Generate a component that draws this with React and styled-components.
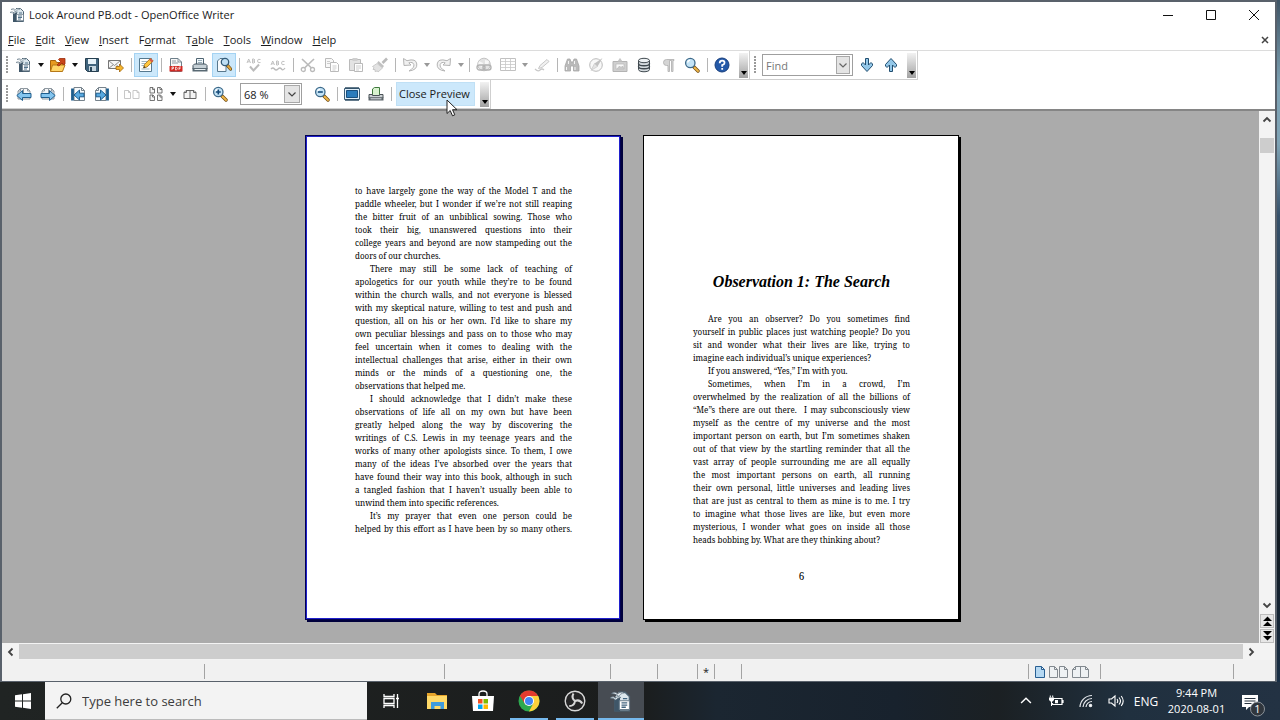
import styled, { createGlobalStyle } from "styled-components";

const GlobalStyle = createGlobalStyle`
  * {
    box-sizing: border-box;
  }
  body {
    margin: 0;
    font-family: "Open Sans", "Noto Sans", sans-serif;
    font-size: 11px;
    color: #1a1a1a;
    overflow: hidden;
  }
  button, input, select {
    font: inherit;
    color: inherit;
    border: 0;
    padding: 0;
    margin: 0;
    background: none;
    border-radius: 0;
    outline: 0;
  }
  svg {
    display: block;
    flex: none;
  }
`;

const Desktop = styled.div`
  height: 100vh;
  display: flex;
  flex-direction: column;
  background: linear-gradient(#3f5566, #7fa3b5 12%, #7fa3b5 20%, #35506a 30%, #101820 75%, #1c3550);
`;
const AppWindow = styled.div`
  flex: 1;
  min-height: 0;
  display: flex;
  flex-direction: column;
  margin-right: 3px;
  background: #fff;
  border: 2px solid #59616b;
  border-bottom-width: 1px;
`;

/* title and menu */
const TitleBar = styled.header`
  display: flex;
  align-items: center;
  height: 25px;
  padding-left: 8px;
`;
const Title = styled.h1`
  flex: 1;
  margin: 0 0 0 3px;
  font-size: 11px;
  font-weight: 400;
`;
const CaptionButton = styled.button`
  width: 43px;
  height: 24px;
  display: grid;
  place-items: center;
`;
const MenuBar = styled.nav`
  display: flex;
  align-items: center;
  gap: 10px;
  height: 24px;
  padding: 3px 6px 0;
  border-bottom: 1px solid #dcdcdc;
`;
const MenuItem = styled.button`
  font-size: 11px;
  line-height: 16px;
`;
const CloseDocument = styled.button`
  margin-left: auto;
`;

/* toolbars */
const ToolbarRow = styled.div`
  display: flex;
  height: 29px;
`;
const Toolbar = styled.div`
  display: flex;
  align-items: center;
  height: 29px;
  padding-left: 3px;
  border-right: 1px solid #cfcfcf;
  border-bottom: 1px solid #cfcfcf;
`;
const Grip = styled.span`
  width: 7px;
  height: 18px;
  background: radial-gradient(circle at 2px 1px, #9a9a9a 1px, transparent 1px) 0 0 / 7px 3px;
`;
const ToolButton = styled.button`
  width: 24px;
  height: 24px;
  display: grid;
  place-items: center;
  background: ${(props) => (props.$active ? "#cce8fb" : "none")};
  border: 1px solid ${(props) => (props.$active ? "#a4d3f3" : "transparent")};
  filter: ${(props) => (props.disabled ? "grayscale(1)" : "none")};
  opacity: ${(props) => (props.disabled ? 0.4 : 1)};
`;
const ArrowButton = styled.button`
  width: 10px;
  height: 24px;
  display: grid;
  place-items: center;
`;
const Separator = styled.span`
  width: 6px;
  height: 14px;
  background: linear-gradient(#b5b5b5, #b5b5b5) center / 1px 100% no-repeat;
`;
const Overflow = styled.button`
  width: 9px;
  height: 25px;
  margin: 0 1px 0 ${(props) => props.$gap};
  display: flex;
  align-items: flex-end;
  justify-content: center;
  padding-bottom: 3px;
  background: linear-gradient(#f2f2f2, #a2a2a2);
`;
const FindBox = styled.div`
  display: flex;
  align-items: center;
  width: 91px;
  height: 22px;
  margin: 0 2px;
  padding: 1px 2px 1px 3px;
  border: 1px solid #9f9f9f;
  color: #777;
`;
const FindInput = styled.input`
  flex: 1;
  min-width: 0;
  &::placeholder {
    color: #777;
    opacity: 1;
  }
`;
const DropButton = styled.button`
  width: 14px;
  height: 18px;
  display: grid;
  place-items: center;
  background: #e4e4e4;
  border: 1px solid #a8a8a8;
`;
const ZoomBox = styled.label`
  display: grid;
  grid-template-columns: 1fr 16px;
  align-items: center;
  width: 62px;
  height: 22px;
  margin: 0 8px;
  padding: 1px;
  border: 1px solid #9f9f9f;
`;
const ZoomSelect = styled.select`
  grid-area: 1 / 1 / 2 / 3;
  appearance: none;
  height: 18px;
  padding-left: 2px;
`;
const ZoomArrow = styled.span`
  grid-area: 1 / 2;
  height: 18px;
  display: grid;
  place-items: center;
  background: #e4e4e4;
  border: 1px solid #a8a8a8;
  pointer-events: none;
`;
const ClosePreview = styled.button`
  position: relative;
  height: 24px;
  width: 79px;
  margin-left: 2px;
  padding: 0 2px 2px;
  background: #cce8fb;
  border: 1px solid #c0e0f5;
  font-size: 11px;
  text-align: left;
  white-space: nowrap;
`;
const Pointer = styled.svg`
  position: absolute;
  left: 49px;
  top: 16px;
  z-index: 2;
`;

/* document area */
const Workspace = styled.main`
  flex: 1;
  min-height: 0;
  display: flex;
  border-top: 2px solid #858585;
`;
const Canvas = styled.div`
  flex: 1;
  display: flex;
  justify-content: center;
  align-items: flex-start;
  gap: 22px;
  padding: 24px 0 0 3px;
  background: #ababab;
`;
const Page = styled.article`
  width: 316px;
  aspect-ratio: 316 / 485;
  display: flex;
  flex-direction: column;
  padding: ${(props) => (props.$selected ? "48px 48px 0 49px" : "134px 48px 0 49px")};
  background: #fff;
  border: 1px solid ${(props) => (props.$selected ? "#000050" : "#000")};
  box-shadow: ${(props) =>
    props.$selected ? "inset 0 0 0 1px #2020cc, 2px 2px 0 #00003c" : "2px 2px 0 #000"};
  font-family: "Noto Serif", "Liberation Serif", serif;
  color: #000;
`;
const ChapterTitle = styled.h2`
  margin: 0 0 18px;
  font-family: "Liberation Serif", serif;
  font-size: 16px;
  line-height: 24px;
  font-style: italic;
  font-weight: 700;
  text-align: center;
  white-space: nowrap;
`;
const Paragraph = styled.p`
  margin: 0;
  font-size: 8px;
  line-height: 13px;
`;
const Line = styled.span`
  display: block;
  white-space: nowrap;
  text-align-last: ${(props) => (props.$last ? "left" : "justify")};
  padding-left: ${(props) => (props.$first ? "15px" : "0")};
`;
const PageNumber = styled.footer`
  margin-top: 23px;
  font-size: 10px;
  line-height: 14px;
  text-align: center;
`;

/* scroll bars */
const VerticalBar = styled.div`
  width: 16px;
  display: flex;
  flex-direction: column;
  align-items: center;
  background: #f3f3f3;
`;
const ScrollButton = styled.button`
  width: 16px;
  height: 17px;
  display: grid;
  place-items: center;
`;
const VerticalThumb = styled.div`
  width: 14px;
  height: 15px;
  margin: 10px 0 auto;
  background: #cdcdcd;
`;
const PageButton = styled.button`
  width: 14px;
  height: 14px;
  margin-top: 1px;
  display: grid;
  place-items: center;
  background: #e6e6e6;
  border: 1px solid #bdbdbd;
`;
const HorizontalBar = styled.div`
  display: flex;
  height: 17px;
  padding: 0 16px 0 1px;
  background: #f3f3f3;
`;
const HorizontalThumb = styled.div`
  flex: 1;
  margin: 1px 0;
  background: #cdcdcd;
`;

const StatusBar = styled.footer`
  display: flex;
  align-items: center;
  height: 21px;
  padding-top: 2px;
  background: #f1f1f1;
`;
const StatusCell = styled.div`
  flex: ${(props) => (props.$width ? `0 0 ${props.$width}` : "1")};
  height: 15px;
  line-height: 15px;
  text-align: center;
  border-right: 1px solid ${(props) => (props.$open ? "transparent" : "#a3a3a3")};
`;
const ViewModes = styled(StatusCell)`
  display: flex;
  align-items: center;
  gap: 4px;
  padding-left: 6px;
`;

/* taskbar */
const Taskbar = styled.footer`
  display: flex;
  height: 38px;
  background: linear-gradient(90deg, #202423, #1b1d1d 50%, #1b2631 56%, #18222d 70%, #1b2023 78%, #20303f 88%, #233243);
  color: #fff;
`;
const StartButton = styled.button`
  width: 45px;
  display: grid;
  place-items: center;
`;
const SearchBox = styled.label`
  display: flex;
  align-items: center;
  gap: 10px;
  width: 322px;
  padding-left: 11px;
  margin-right: 1px;
  background: #f3f3f3;
  border-bottom: 1px solid #bbb;
`;
const SearchInput = styled.input`
  flex: 1;
  font-size: 13px;
  &::placeholder {
    color: #3c3c3c;
    opacity: 1;
  }
`;
const TaskButton = styled.button`
  width: 46px;
  display: grid;
  place-items: center;
  background: ${(props) => (props.$focused ? "#474c53" : "none")};
  &::after {
    content: "";
    grid-area: 1 / 1;
    place-self: end center;
    width: ${(props) => (props.$focused ? "46px" : "38px")};
    height: 2px;
    background: ${(props) => (props.$running ? "#76b9ed" : "none")};
  }
  & > svg {
    grid-area: 1 / 1;
  }
`;
const Tray = styled.div`
  margin-left: auto;
  display: flex;
  align-items: center;
  padding-right: 13px;
`;
const TrayButton = styled.button`
  width: 30px;
  height: 38px;
  display: grid;
  place-items: center;
  font-size: 12px;
`;
const Clock = styled.time`
  width: 71px;
  font-size: 11px;
  line-height: 16px;
  text-align: center;
  white-space: nowrap;
`;
const Notifications = styled.button`
  width: 35px;
  height: 38px;
  display: grid;
  place-items: end;
`;

const WriterIcon = ({ size = 16 }) => (
  <svg width={size} height={size} viewBox="0 0 16 16">
    <path d="M3.5 5v9.5h10V4.5l-3-3H6" fill="#dbe6ec" stroke="#4f6474" />
    <path d="M3 5h4v10H3z" fill="#3f5668" />
    <path d="M1 2.5c2-1.5 3.5-.8 4.2.4C6.5 1.5 8.5 1 10 2 8 2.2 7 3 5.8 4.4 4.5 3 3 2.5 1 2.5zM0 5.5c1.5-1.2 3-.8 3.6.2C4.8 4.5 6.5 4.5 7.5 5.2 6 5.4 5 6 4 7 3 6 1.5 5.5 0 5.5z" fill="#f4f8fa" stroke="#4f6474" strokeWidth=".5" />
    <path d="M6.5 7.5h7v6h-7z" fill="#fff" stroke="#6a7d8b" strokeWidth=".7" />
    <path d="M8 9h4M8 10.5h4M8 12h3M9 6h3" stroke="#40637e" strokeWidth=".9" />
  </svg>
);

// Toolbar glyphs, all on a 16 x 16 grid
const glyphs = {
  open: (
    <>
      <path d="M.5 14V3.5h5l1 2h6V14z" fill="#e79a20" stroke="#a8640c" />
      <path d="M.5 14.5L2.5 8H15l-2.5 6.5z" fill="#ffd568" stroke="#b67818" />
      <path d="M7 8l3.5-3.5-2-2 1-1H15V7l-1 1-2-2-3 3z" fill="#c8461a" stroke="#9c2c0b" strokeWidth=".8" />
    </>
  ),
  save: (
    <>
      <path d="M1.5 1.5h13v13h-11l-2-2z" fill="#40647d" stroke="#263f50" />
      <path d="M4 2h8v5H4z" fill="#e7f2f8" />
      <path d="M5 9h7v5H5z" fill="#c7d6df" />
      <path d="M6 10h2v4H6z" fill="#29475a" />
    </>
  ),
  mail: (
    <>
      <path d="M.5 3.5h12v8H.5z" fill="#f5f5f5" stroke="#777" />
      <path d="M.5 3.5l6 5 6-5M.5 11.5L5 8M12.5 11.5L8.5 8" fill="none" stroke="#777" strokeWidth=".8" />
      <path d="M8 9.5h3.5V7l4 4-4 4v-2.5H8z" fill="#f5b52c" stroke="#a2650a" strokeWidth=".8" />
    </>
  ),
  edit: (
    <>
      <path d="M1.5 1.5h12v13h-12z" fill="#fff" stroke="#55788e" />
      <path d="M3.5 4.5h6M3.5 6.5h4M3.5 8.5h3M3.5 12h8" stroke="#8aa4b4" strokeWidth=".8" />
      <path d="M5.5 11l1-3.5 6-6.2L15.2 4 9 10z" fill="#ffc63e" stroke="#9a6718" strokeWidth=".8" />
      <path d="M12.5 1.3L15.2 4l-1.5 1.5L11 2.8z" fill="#d65a4b" />
      <path d="M5.5 11l.6-2.1 1.5 1.5z" fill="#333" />
    </>
  ),
  pdf: (
    <>
      <path d="M2.5 14.5v-13H10L13.500 5v9.500z" fill="#f8f8f8" stroke="#6d7f8a" />
      <path d="M10 1.5V5h3.5M4 4h4M4 6h6" fill="none" stroke="#6d7f8a" strokeWidth=".8" />
      <path d="M1.5 9h13v5.5h-13z" fill="#d22a24" />
      <path d="M4 13v-3h1.5v1.5H4M7.5 10v3h1l.8-1.5-.8-1.5zM11 13v-3h2M11 11.5h1.5" fill="none" stroke="#fff" strokeWidth=".7" />
    </>
  ),
  print: (
    <>
      <path d="M4.5 7V1.5h7V7" fill="#f2f8fb" stroke="#4f6472" />
      <path d="M6 3.5h4M6 5.5h4" stroke="#98adb9" />
      <path d="M1 12V8.500L2.500 7h11L15 8.500V12z" fill="#c5d0d6" stroke="#41515c" />
      <path d="M.5 11h15v3.5H.5z" fill="#596973" />
      <path d="M2.5 12.5h11" stroke="#e8eff2" />
    </>
  ),
  preview: (
    <>
      <path d="M1.5 14.5V4L4 1.5h6v13z" fill="#f8fbfd" stroke="#58788d" />
      <path d="M11.5 8.5l3 3.5" stroke="#5b461c" strokeWidth="3.4" strokeLinecap="round" />
      <path d="M12 9l2.5 3" stroke="#e1a53b" strokeWidth="2" strokeLinecap="round" />
      <circle cx="9" cy="5" r="3.7" fill="#bfe0f5" stroke="#335b78" strokeWidth="1.3" />
    </>
  ),
  spell: (
    <>
      <path d="M1 6l1.7-4L4.5 6M1.7 4.8h2M6.5 6V2H8q1.500 1 0 2 2 1 0 2zM6.5 4H8M14.5 2.5q-3-1-3 1.5t3 1.5" fill="none" stroke="#555" strokeWidth=".9" />
      <path d="M4 9.5l3.5 4L13 7.5" fill="none" stroke="#555" strokeWidth="2" />
    </>
  ),
  autospell: (
    <>
      <path d="M1 8l1.7-4L4.5 8M1.7 6.8h2M6.5 8V4H8q1.5 1 0 2 2 1 0 2zM6.5 6H8M14.5 4.5q-3-1-3 1.5t3 1.5" fill="none" stroke="#555" strokeWidth=".9" />
      <path d="M1 12q2-2 3.500 0t3.500 0 3.500 0 3.500-1" fill="none" stroke="#555" strokeWidth="1.3" />
    </>
  ),
  cut: (
    <>
      <path d="M2 2l9.5 9M14 2l-9.5 9" stroke="#555" strokeWidth="1.7" />
      <circle cx="3.3" cy="12.5" r="2" fill="none" stroke="#555" strokeWidth="1.3" />
      <circle cx="12.5" cy="12.5" r="2" fill="none" stroke="#555" strokeWidth="1.3" />
    </>
  ),
  copy: (
    <>
      <path d="M1.5 1.5h6l2 2v7h-8z" fill="#eee" stroke="#555" />
      <path d="M6.5 5.5h6l2 2v7h-8z" fill="#fff" stroke="#555" />
      <path d="M3 4.5h3M3 6.5h3M8.5 9h4M8.5 11h4M8.5 13h3" stroke="#666" strokeWidth=".8" />
    </>
  ),
  paste: (
    <>
      <path d="M1.5 2.5h11v11h-11z" fill="#bbb" stroke="#555" />
      <path d="M4.5 1h5v3h-5z" fill="#888" />
      <path d="M6.5 6.5h8v8h-8z" fill="#fff" stroke="#555" />
      <path d="M8 9h5M8 11h5M8 13h3" stroke="#666" strokeWidth=".8" />
    </>
  ),
  brush: (
    <>
      <path d="M15 1.5L10.5 6" stroke="#555" strokeWidth="2.6" />
      <path d="M6.5 4L12 9l-1.5 2L5 6z" fill="#666" />
      <path d="M5 6.5l-4.5 3 1.5 1-1 2h2v2l2.5-.5.5 1 4.5-4z" fill="#bbb" stroke="#666" strokeWidth=".8" />
    </>
  ),
  undo: <path d="M1.5 1.5l.5 7L9 8 6.8 5.8q4-1.3 5 1.7T7 14q8.5-1 7.800-7T5 3.700z" fill="#ddd" stroke="#444" />,
  redo: <path d="M14.5 1.5l-.5 7L7 8l2.200-2.200q-4-1.300-5 1.700T9 14q-8.500-1-7.800-7T11 3.700z" fill="#ddd" stroke="#444" />,
  link: (
    <>
      <circle cx="8" cy="7.5" r="6.3" fill="#bbb" stroke="#666" />
      <path d="M3 4l4 2-1 4-4-2zM9 3l4 1-1 4-3-1z" fill="#eee" />
      <rect x="1" y="8" width="8" height="5" rx="2.5" fill="none" stroke="#444" strokeWidth="1.4" />
      <rect x="7" y="8" width="8" height="5" rx="2.5" fill="none" stroke="#444" strokeWidth="1.4" />
    </>
  ),
  table: (
    <>
      <path d="M.5 1.5h15v12H.5z" fill="#fff" stroke="#666" />
      <path d="M.5 4.5h15M.5 7.5h15M.5 10.5h15M5.5 1.5v12M10.5 1.5v12" stroke="#777" strokeWidth=".8" />
    </>
  ),
  draw: (
    <>
      <path d="M1 12q3 3 5 1t4 0" fill="none" stroke="#777" strokeWidth="1.2" />
      <path d="M4.5 11.5L6 8.5l7-6 2 2-7 6z" fill="#ddd" stroke="#666" strokeWidth=".9" />
    </>
  ),
  binoculars: (
    <>
      <path d="M1 9l2.5-7H6l1 3h2l1-3h2.5L15 9v5H9.500V9h-3v5H1z" fill="#555" stroke="#222" strokeWidth=".8" />
      <path d="M2.5 10v3M11 10v3M4.5 4v3M10.5 4v3" stroke="#e5e5e5" />
    </>
  ),
  compass: (
    <>
      <circle cx="8" cy="8" r="6.3" fill="#eee" stroke="#555" />
      <path d="M14.5 1l-5 8.5-3-3z" fill="#666" />
      <path d="M9.5 9.5l-6.5 4 3.5-7z" fill="#bbb" stroke="#666" strokeWidth=".6" />
    </>
  ),
  gallery: (
    <>
      <path d="M1 4.5h14v10H1z" fill="#888" stroke="#444" />
      <path d="M4 7h8v5H4z" fill="#eee" stroke="#555" strokeWidth=".7" />
      <path d="M5 12l2.5-3L9 10.500 10.500 9l1.500 3M6 4.500l2-3 2 3" fill="#777" stroke="#555" strokeWidth=".7" />
    </>
  ),
  database: (
    <>
      <path d="M2.5 3.5v9c0 3 11 3 11 0v-9" fill="#d4dade" stroke="#414a50" />
      <ellipse cx="8" cy="3.5" rx="5.5" ry="2.2" fill="#eef2f4" stroke="#414a50" />
      <path d="M2.5 6.5c0 3 11 3 11 0M2.5 9.5c0 3 11 3 11 0" fill="none" stroke="#414a50" strokeWidth="1.5" />
    </>
  ),
  marks: <path d="M14 2.5H6.5a3 3 0 0 0 0 6H8v6h1.5v-11h2v11H13v-11h1z" fill="#999" stroke="#444" strokeWidth=".9" />,
  lens: (
    <>
      <path d="M9.5 9.5L14 14" stroke="#704b12" strokeWidth="3.4" strokeLinecap="round" />
      <path d="M10.5 10.5L14 14" stroke="#edb548" strokeWidth="2" strokeLinecap="round" />
      <circle cx="6.3" cy="6" r="4.7" fill="#c4e4f7" stroke="#3d6989" strokeWidth="1.3" />
      <path d="M3.5 5.5q.5-2 2.5-2.4" fill="none" stroke="#fff" strokeWidth="1.3" />
    </>
  ),
  help: (
    <>
      <circle cx="8" cy="8" r="7" fill="#2459a8" stroke="#173e7c" />
      <path d="M5.7 6.2q0-2.5 2.5-2.5t2.3 2.2q0 1.4-2.3 2.3v1.5M8.2 11v1.8" fill="none" stroke="#fff" strokeWidth="1.8" />
    </>
  ),
  down: <path d="M6.5 1.5h3V8L12 5.500 13.500 7v1.500l-5.500 6-5.500-6V7L4 5.500 6.500 8z" fill="#93c7e8" stroke="#214e70" />,
  up: <path d="M6.5 14.5h3V8l2.500 2.500L13.500 9V7.500l-5.500-6-5.500 6V9L4 10.500 6.500 8z" fill="#93c7e8" stroke="#214e70" />,
  previous: (
    <>
      <path d="M7.5 2.5h-3L2 5v8h12V5l-2.5-2.5h-4v8M4.5 2.5V5H2M11.5 2.5V5H14" fill="#f4f6f8" stroke="#8d979f" />
      <path d="M.8 9.500L6.500 4.500v3H15v4H6.500v3z" fill="#83c4ee" stroke="#1e5d8d" />
    </>
  ),
  next: (
    <>
      <path d="M8.5 2.5h-4L2 5v8h12V5l-2.500-2.500h-3v8M4.500 2.500V5H2M11.500 2.500V5H14" fill="#f4f6f8" stroke="#8d979f" />
      <path d="M15.2 9.500L9.500 4.500v3H1v4h8.500v3z" fill="#83c4ee" stroke="#1e5d8d" />
    </>
  ),
  first: (
    <>
      <path d="M4 1.5h7.5l3 3v10H4z" fill="#f7fafc" stroke="#77838c" />
      <path d="M11.5 1.5v3h3" fill="none" stroke="#77838c" />
      <path d="M2.5 2.5v12" stroke="#1e5d8d" strokeWidth="2.8" />
      <path d="M4 9l5.5-5v3.200H14v3.600H9.500V14z" fill="#58a9e0" stroke="#1e5d8d" />
    </>
  ),
  last: (
    <>
      <path d="M1.5 14.5v-10l3-3H12v13z" fill="#f7fafc" stroke="#77838c" />
      <path d="M4.5 1.5v3h-3" fill="none" stroke="#77838c" />
      <path d="M13.5 2.5v12" stroke="#1e5d8d" strokeWidth="2.8" />
      <path d="M12 9L6.500 4v3.200H2v3.600h4.500V14z" fill="#58a9e0" stroke="#1e5d8d" />
    </>
  ),
  twoPages: <path d="M.5 4.5h4l2 2v6h-6zM9 4.5h4l2 2v6H9zM4.500 4.500v2h2M13 4.500v2h2" fill="#fff" stroke="#666" strokeWidth=".9" />,
  fourPages: <path d="M2 1.5h3L6.500 3v4H2zM9.500 1.500h3L14 3v4H9.500zM2 9h3l1.500 1.500v4H2zM9.500 9h3l1.500 1.500v4H9.500zM4.500 1.500v2h2M12 1.500v2h2M4.500 9v2h2M12 9v2h2" fill="#f8f8f8" stroke="#666" strokeWidth=".9" />,
  book: <path d="M8 4.5v8H2v-6l2-2h8l2 2v6H8M4.500 4.500v2H2M11.500 4.500v2H14" fill="#f4f4f4" stroke="#666" />,
  screen: (
    <>
      <path d="M.5 2.5h15v11H.5z" fill="#e0eff9" stroke="#3d5e78" />
      <path d="M2.5 4.5h11v7h-11z" fill="#2b7cbc" stroke="#194f7e" />
      <path d="M1 2h14M1 14h14" stroke="#304f66" strokeWidth="1.5" />
    </>
  ),
  printPage: (
    <>
      <path d="M4.5 9V3l2-1.5h5V9" fill="#d8f2cf" stroke="#407a3e" />
      <path d="M1 12V8.500h3.500v1h7v-1H15V12z" fill="#cbd1d4" stroke="#4a5257" />
      <path d="M.5 11.500h15v3H.5z" fill="#5a6368" />
      <path d="M2.5 12.8h11" stroke="#dfe5e8" />
    </>
  ),
};

const Glyph = ({ name, sign }) => (
  <svg width="16" height="16" viewBox="0 0 16 16">
    {glyphs[name]}
    {sign && <path d={sign === "plus" ? "M3.8 6h5M6.3 3.5v5" : "M3.8 6h5"} stroke="#174b79" strokeWidth="1.6" />}
  </svg>
);

const Tool = ({ icon, label, sign, active, disabled }) => (
  <ToolButton aria-label={label} $active={active} disabled={disabled}>
    {icon === "writer" ? <WriterIcon /> : <Glyph name={icon} sign={sign} />}
  </ToolButton>
);

const DropArrow = ({ label, muted }) => (
  <ArrowButton aria-label={label}>
    <svg width="6" height="4" viewBox="0 0 6 4">
      <path d="M0 0h6L3 4z" fill={muted ? "#999" : "#111"} />
    </svg>
  </ArrowButton>
);

const MoreButton = ({ gap, label }) => (
  <Overflow $gap={gap} aria-label={label}>
    <svg width="6" height="4" viewBox="0 0 6 4">
      <path d="M0 0h6L3 4z" fill="#000" />
    </svg>
  </Overflow>
);

const chevrons = {
  up: "M1.5 6.5L5 3l3.5 3.5",
  down: "M1.5 3.5L5 7l3.5-3.5",
  left: "M6.5 1.5L3 5l3.5 3.5",
  right: "M3.5 1.5L7 5 3.5 8.5",
};

const Chevron = ({ direction, color = "#444", size = 10, stroke = 1.8 }) => (
  <svg width={size} height={size} viewBox="0 0 10 10">
    <path d={chevrons[direction]} fill="none" stroke={color} strokeWidth={stroke} />
  </svg>
);

const menus = [
  ["", "F", "ile"],
  ["", "E", "dit"],
  ["", "V", "iew"],
  ["", "I", "nsert"],
  ["F", "o", "rmat"],
  ["T", "a", "ble"],
  ["", "T", "ools"],
  ["", "W", "indow"],
  ["", "H", "elp"],
];

const leftPage = [
  [
    "to have largely gone the way of the Model T and the",
    "paddle wheeler, but I wonder if we’re not still reaping",
    "the bitter fruit of an unbiblical sowing. Those who",
    "took their big, unanswered questions into their",
    "college years and beyond are now stampeding out the",
    "doors of our churches.",
  ],
  [
    "There may still be some lack of teaching of",
    "apologetics for our youth while they’re to be found",
    "within the church walls, and not everyone is blessed",
    "with my skeptical nature, willing to test and push and",
    "question, all on his or her own. I’d like to share my",
    "own peculiar blessings and pass on to those who may",
    "feel uncertain when it comes to dealing with the",
    "intellectual challenges that arise, either in their own",
    "minds or the minds of a questioning one, the",
    "observations that helped me.",
  ],
  [
    "I should acknowledge that I didn’t make these",
    "observations of life all on my own but have been",
    "greatly helped along the way by discovering the",
    "writings of C.S. Lewis in my teenage years and the",
    "works of many other apologists since. To them, I owe",
    "many of the ideas I’ve absorbed over the years that",
    "have found their way into this book, although in such",
    "a tangled fashion that I haven’t usually been able to",
    "unwind them into specific references.",
  ],
  ["It’s my prayer that even one person could be", "helped by this effort as I have been by so many others."],
];

const rightPage = [
  [
    "Are you an observer? Do you sometimes find",
    "yourself in public places just watching people? Do you",
    "sit and wonder what their lives are like, trying to",
    "imagine each individual’s unique experiences?",
  ],
  ["If you answered, “Yes,” I’m with you."],
  [
    "Sometimes, when I’m in a crowd, I’m",
    "overwhelmed by the realization of all the billions of",
    "“Me”s there are out there.\u00a0 I may subconsciously view",
    "myself as the centre of my universe and the most",
    "important person on earth, but I’m sometimes shaken",
    "out of that view by the startling reminder that all the",
    "vast array of people surrounding me are all equally",
    "the most important persons on earth, all running",
    "their own personal, little universes and leading lives",
    "that are just as central to them as mine is to me. I try",
    "to imagine what those lives are like, but even more",
    "mysterious, I wonder what goes on inside all those",
    "heads bobbing by. What are they thinking about?",
  ],
];

// The left page starts mid-paragraph and is filled right up to its last line
const BodyText = ({ paragraphs, continued }) =>
  paragraphs.map((lines, p) => (
    <Paragraph key={lines[0]}>
      {lines.map((line, i) => (
        <Line
          key={line}
          $first={i === 0 && !(continued && p === 0)}
          $last={i === lines.length - 1 && !(continued && p === paragraphs.length - 1)}
        >
          {line}
        </Line>
      ))}
    </Paragraph>
  ));

const StandardToolbar = () => (
  <Toolbar>
    <Grip />
    <Tool icon="writer" label="New" />
    <DropArrow label="New options" />
    <Tool icon="open" label="Open" />
    <DropArrow label="Open options" />
    <Tool icon="save" label="Save" />
    <Tool icon="mail" label="Document as e-mail" />
    <Separator />
    <Tool icon="edit" label="Edit file" active />
    <Separator />
    <Tool icon="pdf" label="Export as PDF" />
    <Tool icon="print" label="Print file" />
    <Tool icon="preview" label="Page preview" active />
    <Separator />
    <Tool icon="spell" label="Spelling" disabled />
    <Tool icon="autospell" label="AutoSpellcheck" disabled />
    <Separator />
    <Tool icon="cut" label="Cut" disabled />
    <Tool icon="copy" label="Copy" disabled />
    <Tool icon="paste" label="Paste" disabled />
    <Tool icon="brush" label="Format paintbrush" disabled />
    <Separator />
    <Tool icon="undo" label="Undo" disabled />
    <DropArrow label="Undo history" muted />
    <Tool icon="redo" label="Redo" disabled />
    <DropArrow label="Redo history" muted />
    <Separator />
    <Tool icon="link" label="Hyperlink" disabled />
    <Tool icon="table" label="Table" disabled />
    <DropArrow label="Table size" muted />
    <Tool icon="draw" label="Show draw functions" disabled />
    <Separator />
    <Tool icon="binoculars" label="Find and replace" disabled />
    <Tool icon="compass" label="Navigator" disabled />
    <Tool icon="gallery" label="Gallery" disabled />
    <Tool icon="database" label="Data sources" />
    <Tool icon="marks" label="Nonprinting characters" disabled />
    <Tool icon="lens" label="Zoom" />
    <Separator />
    <Tool icon="help" label="Help" />
    <MoreButton gap="5px" label="Standard toolbar options" />
  </Toolbar>
);

const PreviewToolbar = () => (
  <Toolbar>
    <Grip />
    <Tool icon="previous" label="Previous page" />
    <Tool icon="next" label="Next page" />
    <Separator />
    <Tool icon="first" label="First page" />
    <Tool icon="last" label="Last page" />
    <Separator />
    <Tool icon="twoPages" label="Two pages" disabled />
    <Tool icon="fourPages" label="Multiple pages" />
    <DropArrow label="Choose pages" />
    <Tool icon="book" label="Book preview" />
    <Separator />
    <Tool icon="lens" sign="plus" label="Zoom in" />
    <ZoomBox>
      <ZoomSelect aria-label="Preview zoom" defaultValue="68 %">
        <option>50 %</option>
        <option>68 %</option>
        <option>100 %</option>
      </ZoomSelect>
      <ZoomArrow>
        <Chevron direction="down" stroke={1.2} />
      </ZoomArrow>
    </ZoomBox>
    <Tool icon="lens" sign="minus" label="Zoom out" />
    <Separator />
    <Tool icon="screen" label="Full screen" />
    <Tool icon="printPage" label="Print page view" />
    <Separator />
    <ClosePreview>
      Close Preview
      <Pointer width="12" height="18" viewBox="0 0 12 18">
        <path d="M1 1v13.5l3.200-3 2.300 5.300 2.300-1-2.300-5.100H11z" fill="#fff" stroke="#222" />
      </Pointer>
    </ClosePreview>
    <MoreButton gap="5px" label="Preview toolbar options" />
  </Toolbar>
);

const FindToolbar = () => (
  <Toolbar>
    <Grip />
    <FindBox>
      <FindInput aria-label="Find" placeholder="Find" />
      <DropButton aria-label="Recent searches">
        <Chevron direction="down" stroke={1.2} color="#666" />
      </DropButton>
    </FindBox>
    <Tool icon="down" label="Find next" />
    <Tool icon="up" label="Find previous" />
    <MoreButton gap="4px" label="Find toolbar options" />
  </Toolbar>
);

const Tasks = () => (
  <>
    <TaskButton aria-label="Task view">
      <svg width="17" height="16" viewBox="0 0 17 16" fill="none" stroke="#fff" strokeWidth="1.3">
        <path d="M1 1v2.5h10V1M1 15v-2.5h10V15M1 5.5h10v5H1zM14.5 1v14M13 5.5h3" />
      </svg>
    </TaskButton>
    <TaskButton aria-label="File Explorer">
      <svg width="21" height="18" viewBox="0 0 21 18">
        <path d="M0 1h8l2 2h10v14H0z" fill="#e7a52b" />
        <path d="M0 4h20v13H0z" fill="#ffd968" />
        <path d="M4 17v-7h13v7h-3.5v-3h-6v3z" fill="#3f9bdc" />
      </svg>
    </TaskButton>
    <TaskButton aria-label="Microsoft Store">
      <svg width="22" height="22" viewBox="0 0 22 22">
        <path d="M7 8V4q0-3 4-3t4 3v4" fill="none" stroke="#fff" strokeWidth="1.3" />
        <path d="M0 6h22l-1 15H1z" fill="#fff" />
        <path d="M6 9h4.5v4.5H6z" fill="#f25022" />
        <path d="M11.5 9H16v4.5h-4.5z" fill="#7fba00" />
        <path d="M6 14.5h4.5V19H6z" fill="#00a4ef" />
        <path d="M11.5 14.5H16V19h-4.5z" fill="#ffb900" />
      </svg>
    </TaskButton>
    <TaskButton aria-label="Chrome" $running>
      <svg width="22" height="22" viewBox="0 0 22 22">
        <circle cx="11" cy="11" r="10.5" fill="#2da94f" />
        <path d="M11 11L1.900 5.800A10.500 10.500 0 0 1 20.100 5.800z" fill="#e33b2e" />
        <path d="M1.900 5.800L6.700 13.500 11 11V5.800z" fill="#e33b2e" />
        <path d="M11 6h9.200A10.500 10.500 0 0 1 11 21.500l4.300-8z" fill="#fdd13a" />
        <circle cx="11" cy="11" r="5" fill="#fff" />
        <circle cx="11" cy="11" r="4" fill="#4285f4" />
      </svg>
    </TaskButton>
    <TaskButton aria-label="OBS Studio" $running>
      <svg width="22" height="22" viewBox="0 0 22 22">
        <circle cx="11" cy="11" r="9.8" fill="#252526" stroke="#d7d7d7" strokeWidth="1.4" />
        <g fill="none" stroke="#d7d7d7" strokeWidth="2">
          <path d="M11 11q-4-3-1.5-7.5" />
          <path d="M11 11q-4-3-1.5-7.5" transform="rotate(120 11 11)" />
          <path d="M11 11q-4-3-1.5-7.5" transform="rotate(240 11 11)" />
        </g>
      </svg>
    </TaskButton>
    <TaskButton aria-label="OpenOffice Writer" $running $focused>
      <WriterIcon size={23} />
    </TaskButton>
  </>
);

const App = () => {
  return (
    <Desktop>
      <GlobalStyle />
      <AppWindow>
        <TitleBar>
          <WriterIcon />
          <Title>Look Around PB.odt - OpenOffice Writer</Title>
          <CaptionButton aria-label="Minimize">
            <svg width="10" height="10" viewBox="0 0 10 10">
              <path d="M0 5.5h10" stroke="#111" />
            </svg>
          </CaptionButton>
          <CaptionButton aria-label="Maximize">
            <svg width="10" height="10" viewBox="0 0 10 10">
              <path d="M.5.5h9v9h-9z" fill="none" stroke="#111" />
            </svg>
          </CaptionButton>
          <CaptionButton aria-label="Close">
            <svg width="10" height="10" viewBox="0 0 10 10">
              <path d="M0 0l10 10M10 0L0 10" stroke="#111" />
            </svg>
          </CaptionButton>
        </TitleBar>
        <MenuBar>
          {menus.map(([before, key, after]) => (
            <MenuItem key={before + key + after}>
              {before}
              <u>{key}</u>
              {after}
            </MenuItem>
          ))}
          <CloseDocument aria-label="Close document">
            <svg width="8" height="8" viewBox="0 0 8 8">
              <path d="M1 1l6 6M7 1L1 7" stroke="#444" strokeWidth="1.5" />
            </svg>
          </CloseDocument>
        </MenuBar>
        <ToolbarRow>
          <StandardToolbar />
          <FindToolbar />
        </ToolbarRow>
        <ToolbarRow>
          <PreviewToolbar />
        </ToolbarRow>

        <Workspace>
          <Canvas>
            <Page $selected>
              <BodyText paragraphs={leftPage} continued />
            </Page>
            <Page>
              <ChapterTitle>Observation 1: The Search</ChapterTitle>
              <BodyText paragraphs={rightPage} />
              <PageNumber>6</PageNumber>
            </Page>
          </Canvas>
          <VerticalBar>
            <ScrollButton aria-label="Scroll up">
              <Chevron direction="up" />
            </ScrollButton>
            <VerticalThumb />
            <ScrollButton aria-label="Scroll down">
              <Chevron direction="down" />
            </ScrollButton>
            <PageButton aria-label="Previous page">
              <svg width="9" height="10" viewBox="0 0 9 10">
                <path d="M0 5L4.5.5 9 5zM0 10l4.5-4.5L9 10z" fill="#000" />
              </svg>
            </PageButton>
            <PageButton aria-label="Next page">
              <svg width="9" height="10" viewBox="0 0 9 10">
                <path d="M0 0l4.5 4.5L9 0zM0 5l4.5 4.5L9 5z" fill="#000" />
              </svg>
            </PageButton>
          </VerticalBar>
        </Workspace>
        <HorizontalBar>
          <ScrollButton aria-label="Scroll left">
            <Chevron direction="left" />
          </ScrollButton>
          <HorizontalThumb />
          <ScrollButton aria-label="Scroll right">
            <Chevron direction="right" />
          </ScrollButton>
        </HorizontalBar>
        <StatusBar>
          <StatusCell $width="203px" />
          <StatusCell $width="240px" />
          <StatusCell $width="166px" />
          <StatusCell $width="47px" />
          <StatusCell $width="40px" />
          <StatusCell $width="17px">*</StatusCell>
          <StatusCell $width="27px" />
          <StatusCell />
          <ViewModes $width="72px">
            <svg width="10" height="12" viewBox="0 0 10 12">
              <path d="M.5.5h6l3 3v8h-9zM6.5.5v3h3" fill="#b5d8f2" stroke="#285f92" />
            </svg>
            <svg width="19" height="12" viewBox="0 0 19 12">
              <path d="M.5.5h5l3 3v8h-8zM5.5.5v3h3M10.5.5h5l3 3v8h-8zM15.5.5v3h3" fill="#eef1f3" stroke="#82898f" />
            </svg>
            <svg width="17" height="12" viewBox="0 0 17 12">
              <path d="M8.5 11.5h-8v-8l3-3h10l3 3v8h-8V.5M3.5.5v3h-3M13.5.5v3h3" fill="#eef1f3" stroke="#82898f" />
            </svg>
          </ViewModes>
          <StatusCell $width="133px" />
          <StatusCell $width="41px" $open />
        </StatusBar>
      </AppWindow>

      <Taskbar>
        <StartButton aria-label="Start">
          <svg width="16" height="16" viewBox="0 0 16 16">
            <path d="M0 2.3l7-1v6.2H0zM8 1.2L16 0v7.5H8zM0 8.5h7v6.2l-7-1zM8 8.5h8V16l-8-1.2z" fill="#fff" />
          </svg>
        </StartButton>
        <SearchBox>
          <svg width="16" height="16" viewBox="0 0 16 16" fill="none" stroke="#222" strokeWidth="1.3">
            <circle cx="9.8" cy="6" r="5" />
            <path d="M6.3 9.7L.8 15.2" />
          </svg>
          <SearchInput aria-label="Search" placeholder="Type here to search" />
        </SearchBox>
        <Tasks />
        <Tray>
          <TrayButton aria-label="Show hidden icons">
            <Chevron direction="up" color="#fff" size={14} stroke={1} />
          </TrayButton>
          <TrayButton aria-label="Battery">
            <svg width="16" height="12" viewBox="0 0 16 12">
              <path d="M6 3.5h8v6H4.5V8M15 5v3" fill="none" stroke="#fff" strokeWidth="1.2" />
              <path d="M7 5h3v3.2H7zM1 2.5h5V5L4.5 6.5h-2L1 5z" fill="#fff" />
              <path d="M2.3.5v2M4.7.5v2M3.5 6v5" stroke="#fff" />
            </svg>
          </TrayButton>
          <TrayButton aria-label="Network">
            <svg width="14" height="14" viewBox="0 0 14 14" fill="none" stroke="#e5e8ec" strokeWidth="1.2">
              <path d="M1 13A12 12 0 0 1 13 1.5M4 13a9 9 0 0 1 9-8.5M7 13a6 6 0 0 1 6-5.5" />
              <circle cx="11.5" cy="11.5" r="1.2" fill="#fff" />
            </svg>
          </TrayButton>
          <TrayButton aria-label="Volume">
            <svg width="17" height="14" viewBox="0 0 17 14" fill="none" stroke="#fff" strokeWidth="1.1">
              <path d="M1 5h2.5L7 2v10L3.5 9H1zM9 5q1.5 2 0 4M11 3.5q3 3.5 0 7M13.2 2q4 5 0 10" />
            </svg>
          </TrayButton>
          <TrayButton aria-label="Input language">ENG</TrayButton>
          <Clock dateTime="2020-08-01T21:44">
            9:44 PM
            <br />
            2020-08-01
          </Clock>
          <Notifications aria-label="1 new notification">
            <svg width="26" height="28" viewBox="0 0 26 28">
              <path d="M1 3h16v12H8l-3 3v-3H1z" fill="#fff" />
              <path d="M3.5 6.5h11M3.5 9h11M3.5 11.5h7" stroke="#26323f" />
              <circle cx="16.5" cy="17" r="7" fill="#30363d" stroke="#8b9299" />
              <text x="16.5" y="21" textAnchor="middle" fontSize="11" fill="#fff">
                1
              </text>
            </svg>
          </Notifications>
        </Tray>
      </Taskbar>
    </Desktop>
  );
};

export default App;
